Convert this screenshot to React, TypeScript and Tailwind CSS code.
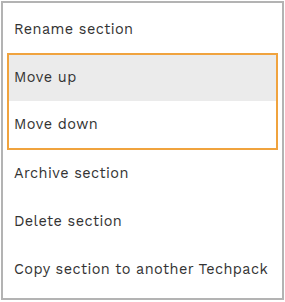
import React from "react";

const font = { fontFamily: '"Work Sans", Inter, "Noto Sans", sans-serif' };

function Item({ label, active, inner, h }: { label: string; active?: boolean; inner?: boolean; h: string }) {
  return (
    <div
      className={`flex ${h} items-center text-[14.5px] tracking-[0.4px] text-[#333333] ${inner ? "pl-[5px]" : "pl-[11px]"} ${active ? "bg-[#ebebeb]" : ""}`}
    >
      {label}
    </div>
  );
}

export default function App() {
  return (
    <div className="w-[285px] h-[302px] bg-white pt-[1px] pl-[1px]" style={font}>
      <div className="w-[283px] h-[299px] border-2 border-[#b3b3b3] bg-white pt-[3px] box-border">
        <Item label="Rename section" h="h-[47px]" />
        <div className="mx-[4px] border-2 border-[#f0a33e]">
          <Item label="Move up" active inner h="h-[46px]" />
          <Item label="Move down" inner h="h-[47px]" />
        </div>
        <Item label="Archive section" h="h-[48px]" />
        <Item label="Delete section" h="h-[48px]" />
        <Item label="Copy section to another Techpack" h="h-[48px]" />
      </div>
    </div>
  );
}
